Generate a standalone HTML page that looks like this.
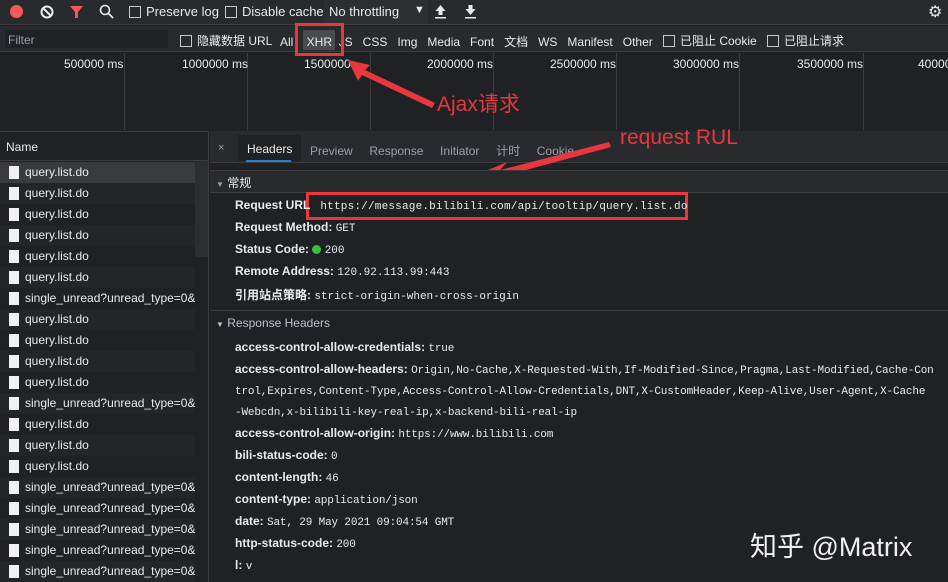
<!DOCTYPE html>
<html><head><meta charset="utf-8"><style>
*{margin:0;padding:0;box-sizing:border-box}
body{width:948px;height:582px;overflow:hidden;background:#202124;font-family:"Liberation Sans","Noto Sans CJK SC",sans-serif;color:#e8eaed;font-size:12px;position:relative}
.a{position:absolute;white-space:nowrap}
.mono{font-family:"Liberation Mono","Noto Sans CJK SC",monospace;font-size:11px;color:#e8eaed}
.k{font-weight:bold;color:#e8eaed}
.cb{display:inline-block;width:12px;height:12px;border:1px solid #c8c8c8;vertical-align:-2px;margin-right:5px}
.g{color:#9aa0a6}
.red{border:3px solid #e8383d}
</style></head><body>
<div class="a" style="left:0;top:0;width:948px;height:25px;background:#292a2d;border-bottom:1px solid #3c3c3f"></div>
<div class="a" style="left:10px;top:5px;width:13px;height:13px;border-radius:50%;background:#f25a56"></div>
<svg class="a" style="left:40px;top:5px" width="14" height="14"><circle cx="7" cy="7" r="5.5" fill="none" stroke="#e8eaed" stroke-width="2"/><line x1="3" y1="3" x2="11" y2="11" stroke="#e8eaed" stroke-width="2"/></svg>
<svg class="a" style="left:69px;top:5px" width="15" height="14"><path d="M1 1h13l-5 6v6h-3v-6z" fill="#f25a56"/></svg>
<svg class="a" style="left:99px;top:4px" width="15" height="15"><circle cx="6" cy="6" r="4.5" fill="none" stroke="#e8eaed" stroke-width="1.6"/><line x1="9.5" y1="9.5" x2="14" y2="14" stroke="#e8eaed" stroke-width="1.8"/></svg>
<div class="a" style="left:129px;top:4px;font-size:13px"><span class="cb"></span>Preserve log</div>
<div class="a" style="left:225px;top:4px;font-size:13px"><span class="cb"></span>Disable cache</div>
<div class="a" style="left:324px;top:0;width:104px;height:24px;background:#2d2e31"></div>
<div class="a" style="left:329px;top:4px;font-size:13px">No throttling</div>
<div class="a" style="left:414px;top:4px;font-size:11px">▼</div>
<svg class="a" style="left:434px;top:4px" width="13" height="15"><path d="M6.5 1l5 6h-3v4h-4v-4h-3z M1 13h11v1.5H1z" fill="#e8eaed"/></svg>
<svg class="a" style="left:464px;top:4px" width="13" height="15"><path d="M6.5 11l5-6h-3V1h-4v4h-3z M1 13h11v1.5H1z" fill="#e8eaed"/></svg>
<div class="a" style="left:928px;top:2px;font-size:16px">⚙</div>
<div class="a" style="left:0;top:26px;width:948px;height:26px;background:#292a2d;border-bottom:1px solid #3c3c3f"></div>
<div class="a" style="left:5px;top:30px;width:163px;height:18px;background:#202124"></div>
<div class="a g" style="left:8px;top:33px;font-size:12px">Filter</div>
<div class="a" style="left:180px;top:32px;font-size:12px"><span class="cb"></span>隐藏数据 URL</div>
<div class="a" style="left:303px;top:30px;width:32px;height:20px;background:#4a4b4e"></div>
<div class="a" style="left:280px;top:33px;font-size:12px">All&nbsp;&nbsp;&nbsp;&nbsp;XHR&nbsp;&nbsp;JS&nbsp;&nbsp;&nbsp;CSS&nbsp;&nbsp;&nbsp;Img&nbsp;&nbsp;&nbsp;Media&nbsp;&nbsp;&nbsp;Font&nbsp;&nbsp;&nbsp;文档&nbsp;&nbsp;&nbsp;WS&nbsp;&nbsp;&nbsp;Manifest&nbsp;&nbsp;&nbsp;Other</div>
<div class="a" style="left:663px;top:32px;font-size:12px"><span class="cb"></span>已阻止 Cookie</div>
<div class="a" style="left:767px;top:32px;font-size:12px"><span class="cb"></span>已阻止请求</div>
<div class="a red" style="left:295px;top:23px;width:49px;height:33px"></div>
<div class="a" style="left:124px;top:53px;width:1px;height:77px;background:#3c3c3f"></div>
<div class="a" style="left:247px;top:53px;width:1px;height:77px;background:#3c3c3f"></div>
<div class="a" style="left:370px;top:53px;width:1px;height:77px;background:#3c3c3f"></div>
<div class="a" style="left:493px;top:53px;width:1px;height:77px;background:#3c3c3f"></div>
<div class="a" style="left:616px;top:53px;width:1px;height:77px;background:#3c3c3f"></div>
<div class="a" style="left:739px;top:53px;width:1px;height:77px;background:#3c3c3f"></div>
<div class="a" style="left:863px;top:53px;width:1px;height:77px;background:#3c3c3f"></div>
<div class="a" style="left:64px;top:57px;font-size:12px">500000 ms</div>
<div class="a" style="left:182px;top:57px;font-size:12px">1000000 ms</div>
<div class="a" style="left:304px;top:57px;font-size:12px">1500000</div>
<div class="a" style="left:427px;top:57px;font-size:12px">2000000 ms</div>
<div class="a" style="left:550px;top:57px;font-size:12px">2500000 ms</div>
<div class="a" style="left:673px;top:57px;font-size:12px">3000000 ms</div>
<div class="a" style="left:797px;top:57px;font-size:12px">3500000 ms</div>
<div class="a" style="left:918px;top:57px;font-size:12px">40000</div>
<svg class="a" style="left:340px;top:55px" width="100" height="55"><path d="M8 5 L30 10 L25 15 L95 48 L92 53 L22 20 L18 26 Z" fill="#e8383d"/></svg>
<div class="a" style="left:437px;top:88px;font-size:21px;color:#e8383d">Ajax请求</div>
<div class="a" style="left:0;top:131px;width:209px;height:451px;background:#202124;border-top:1px solid #3c3c3f;border-right:1px solid #3c3c3f"></div>
<div class="a" style="left:6px;top:140px;font-size:12px">Name</div>
<div class="a" style="left:0;top:160px;width:208px;height:1px;background:#3c3c3f"></div>
<div class="a" style="left:195px;top:161px;width:13px;height:96px;background:#2c2d30"></div>
<div id="list"></div>
<div class="a" style="left:210px;top:131px;width:738px;height:32px;background:#292a2d;border-bottom:1px solid #3c3c3f"></div>
<div class="a g" style="left:218px;top:142px;font-size:11px">×</div>
<div class="a" style="left:238px;top:135px;width:63px;height:26px;background:#202124"></div>
<div class="a" style="left:246px;top:160px;width:45px;height:2px;background:#2a7fd6"></div>
<div class="a" style="left:247px;top:142px;font-size:12px">Headers</div>
<div class="a g" style="left:310px;top:142px;font-size:12px">Preview&nbsp;&nbsp;&nbsp;&nbsp;&nbsp;Response&nbsp;&nbsp;&nbsp;&nbsp;&nbsp;Initiator&nbsp;&nbsp;&nbsp;&nbsp;&nbsp;计时&nbsp;&nbsp;&nbsp;&nbsp;&nbsp;Cookie</div>
<div class="a" style="left:620px;top:126px;font-size:21px;color:#e8383d">request RUL</div>
<svg class="a" style="left:455px;top:140px" width="160" height="50"><path d="M154 2 L45 30 L52 22 L5 42 L58 44 L49 36 L156 7Z" fill="#e8383d"/></svg>
<div class="a" style="left:210px;top:170px;width:738px;height:23px;background:#292a2d;border-top:1px solid #3c3c3f;border-bottom:1px solid #3c3c3f"></div>
<div class="a" style="left:216px;top:174px;font-size:12px"><span class="g" style="font-size:8px">▼</span> 常规</div>
<div class="a red" style="left:306px;top:192px;width:382px;height:28px"></div>
<div class="a" style="left:235px;top:198px"><span class="k">Request URL</span>&nbsp;&nbsp;&nbsp;<span class="mono" style="letter-spacing:0.2px">https://message.bilibili.com/api/tooltip/query.list.do</span></div>
<div class="a" style="left:235px;top:220px"><span class="k">Request Method:</span> <span class="mono">GET</span></div>
<div class="a" style="left:235px;top:242px"><span class="k">Status Code:</span> <span style="display:inline-block;width:9px;height:9px;border-radius:50%;background:#3cbf3c;vertical-align:-1px"></span> <span class="mono">200</span></div>
<div class="a" style="left:235px;top:264px"><span class="k">Remote Address:</span> <span class="mono">120.92.113.99:443</span></div>
<div class="a" style="left:235px;top:286px"><span class="k">引用站点策略:</span> <span class="mono">strict-origin-when-cross-origin</span></div>
<div class="a" style="left:210px;top:310px;width:738px;height:1px;background:#3c3c3f"></div>
<div class="a" style="left:216px;top:316px;font-size:12px;color:#bdc1c6"><span style="font-size:8px">▼</span> Response Headers</div>
<div id="rh"></div>
<div class="a" style="left:750px;top:525px;font-size:27px;color:#f0f0f0">知乎 @Matrix</div>
<script>
var L=document.getElementById('list'),h='';
var s='qqqqqqsqqqqsqqqsssss';
for(var i=0;i<20;i++){var y=162+i*21;var bg=i==0?'#3a3b3e':(i%2?'#242528':'#202124');
h+='<div class="a" style="left:0;top:'+y+'px;width:195px;height:21px;background:'+bg+'"></div>';
h+='<div class="a" style="left:9px;top:'+(y+4)+'px;width:10px;height:13px;background:#f1f1f1"></div>';
h+='<div class="a" style="left:25px;top:'+(y+3)+'px;font-size:12px;width:170px;overflow:hidden">'+(s[i]=='q'?'query.list.do':'single_unread?unread_type=0&amp;')+'</div>';}
L.innerHTML=h;
var R=[[340,'access-control-allow-credentials:','true'],[362,'access-control-allow-headers:','Origin,No-Cache,X-Requested-With,If-Modified-Since,Pragma,Last-Modified,Cache-Con'],[383,'','trol,Expires,Content-Type,Access-Control-Allow-Credentials,DNT,X-CustomHeader,Keep-Alive,User-Agent,X-Cache'],[404,'','-Webcdn,x-bilibili-key-real-ip,x-backend-bili-real-ip'],[426,'access-control-allow-origin:','https://www.bilibili.com'],[448,'bili-status-code:','0'],[470,'content-length:','46'],[492,'content-type:','application/json'],[514,'date:','Sat, 29 May 2021 09:04:54 GMT'],[536,'http-status-code:','200'],[558,'l:','v']];
h='';R.forEach(function(r){h+='<div class="a" style="left:235px;top:'+r[0]+'px">'+(r[1]?'<span class="k">'+r[1]+'</span> ':'')+'<span class="mono" style="letter-spacing:-0.15px">'+r[2]+'</span></div>';});
document.getElementById('rh').innerHTML=h;
</script>
</body></html>
